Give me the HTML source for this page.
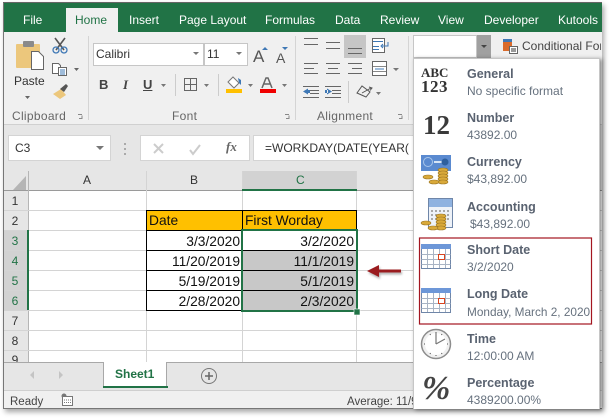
<!DOCTYPE html>
<html><head><meta charset="utf-8">
<style>
html,body{margin:0;padding:0;background:#fff;}
#p{position:relative;width:612px;height:419px;overflow:hidden;background:#fff;font-family:"Liberation Sans",sans-serif;}
#p div{position:absolute;white-space:nowrap;}
.t{font-size:12px;color:#fff;top:12px;line-height:16px;}
.g{font-size:12px;color:#666;line-height:14px;letter-spacing:.3px;}
.b{background:#d4d4d4;}
.n{font-size:12px;color:#333;line-height:14px;width:24px;text-align:center;left:3px;}
.c{font-size:13.800px;color:#111;line-height:20px;text-align:right;}
.h{font-size:12.500px;font-weight:bold;color:#596270;left:467px;line-height:15px;}
.s{font-size:12px;color:#66717e;left:467px;line-height:15px;}
svg{position:absolute;overflow:visible;}
</style></head><body><div id="p">

<!-- window -->
<div style="left:3px;top:2px;width:599px;height:407px;background:#f0f0f0;box-shadow:2px 3px 5px rgba(0,0,0,.35);"></div>
<div style="left:3px;top:2px;width:1px;height:407px;background:#777;"></div>
<div style="left:3px;top:2px;width:599px;height:1px;background:#666;"></div>
<div style="left:4px;top:3px;width:598px;height:29px;background:#217346;"></div>
<div style="left:66px;top:8px;width:52px;height:24px;background:#f0f0f0;"></div>
<div class="t" style="left:23px;">File</div>
<div class="t" style="left:75px;color:#217346;">Home</div>
<div class="t" style="left:129px;">Insert</div>
<div class="t" style="left:179px;">Page Layout</div>
<div class="t" style="left:265px;">Formulas</div>
<div class="t" style="left:335px;">Data</div>
<div class="t" style="left:380px;">Review</div>
<div class="t" style="left:438px;">View</div>
<div class="t" style="left:484px;">Developer</div>
<div class="t" style="left:558px;width:43px;overflow:hidden;">Kutools T</div>

<!-- clipboard -->
<svg style="left:0;top:0" width="210" height="125">
<rect x="16" y="44" width="24" height="24" fill="#ecc77c" rx="1"/>
<rect x="23" y="41" width="11" height="6" fill="#8a8a8a" rx="1"/>
<path d="M31.500 51.500h7l5 5v13h-12z" fill="#fff" stroke="#666"/>
<path d="M55 38l9 12M65 38l-9 12" stroke="#555" stroke-width="1.600" fill="none"/>
<circle cx="56" cy="50" r="3" fill="none" stroke="#3f78b5" stroke-width="1.300"/>
<circle cx="64" cy="50" r="3" fill="none" stroke="#3f78b5" stroke-width="1.300"/>
<path d="M52.500 63.500h6l2 2v8h-8z" fill="#fff" stroke="#666"/>
<rect x="58.500" y="67.500" width="8" height="8" fill="#fff" stroke="#666"/>
<path d="M60 70h5M60 72h5M60 74h5" stroke="#3f78b5"/>
<path d="M74 68l5 0-2.500 3zM25 96l5 0-2.500 3z" fill="#666"/>
<path d="M53 94l8-5 5 6-6 4z" fill="#ecc77c"/>
<path d="M60 89l6-5 2 2-4 6z" fill="#555"/>
<path d="M78 114.500h4M79 118.500h3v-3" stroke="#888" fill="none"/>
</svg>
<div style="left:14px;top:74px;font-size:12px;color:#333;line-height:14px;">Paste</div>
<div class="g" style="left:12px;top:109px;">Clipboard</div>
<div class="b" style="left:88px;top:36px;width:1px;height:84px;"></div>

<!-- font -->
<div style="left:93px;top:43px;width:109px;height:21px;background:#fff;border:1px solid #c6c6c6;"></div>
<div style="left:204px;top:43px;width:42px;height:21px;background:#fff;border:1px solid #c6c6c6;"></div>
<div style="left:96px;top:47px;font-size:12px;color:#333;line-height:14px;">Calibri</div>
<div style="left:207px;top:47px;font-size:12px;color:#333;line-height:14px;">11</div>
<div style="left:99px;top:77px;font-size:13px;font-weight:bold;color:#444;line-height:15px;">B</div>
<div style="left:123px;top:77px;font-size:13px;font-style:italic;color:#444;line-height:15px;font-family:'Liberation Serif',serif;font-weight:bold;">I</div>
<div style="left:143px;top:77px;font-size:13px;font-weight:bold;color:#444;line-height:15px;text-decoration:underline;">U</div>
<div style="left:253px;top:48px;font-size:17px;color:#555;line-height:18px;">A</div>
<div style="left:276px;top:51px;font-size:14px;color:#555;line-height:15px;">A</div>
<div class="g" style="left:172px;top:109px;">Font</div>
<svg style="left:0;top:0" width="300" height="125">
<path d="M193 52l6 0-3 3zM236 52l6 0-3 3zM161 84l5 0-2.500 3zM204 84l5 0-2.500 3zM248 84l5 0-2.500 3zM282 84l5 0-2.500 3z" fill="#777"/>
<path d="M262 50l3-3 3 3zM282 47h6l-3 3z" fill="#3f78b5"/>
<rect x="184.500" y="78.500" width="12" height="12" fill="none" stroke="#666"/>
<path d="M190.500 78v12M184 84.500h13" stroke="#666"/>
<rect x="175" y="74" width="1" height="22" fill="#ccc"/>
<rect x="218" y="74" width="1" height="22" fill="#ccc"/>
<path d="M228 82l5-5 6 6-5 5z" fill="#fff" stroke="#777"/>
<path d="M238 78l3 2v5l-2-2z" fill="#3f78b5"/>
<rect x="226" y="89" width="16" height="4" fill="#ffc000"/>
<rect x="260" y="89" width="16" height="4" fill="#f00000"/>
<path d="M262 88l4-10h2l4 10M264 84h6" fill="none" stroke="#666" stroke-width="1.500"/>
<path d="M285 114.500h4M286 118.500h3v-3" stroke="#888" fill="none"/>
</svg>
<div class="b" style="left:295px;top:36px;width:1px;height:84px;"></div>

<!-- alignment -->
<div style="left:344px;top:35px;width:22px;height:23px;background:#c6c6c6;"></div>
<svg style="left:0;top:0" width="412" height="125">
<path d="M304 38.500h14M304 44.500h14M326 42.500h14M326 48.500h14M348 48.500h14M348 53.500h14" stroke="#666"/>
<path d="M304 63.500h14M304 68.500h10M304 73.500h14M326 63.500h14M328 68.500h10M326 73.500h14M348 63.500h14M352 68.500h10M348 73.500h14" stroke="#666"/>
<path d="M303 86.500h16M310 90.500h9M310 93.500h9M303 97.500h16M325 86.500h16M332 90.500h9M332 93.500h9M325 97.500h16" stroke="#666"/>
<path d="M303 91.500l5-3v6zM308 90h2v3h-2zM332 91.500l-5-3v6zM325 90h3v3h-3z" fill="#3f78b5"/>
<rect x="372.500" y="38.500" width="12" height="14" fill="#fff" stroke="#666"/>
<path d="M373 41.500h10M373 46.500h6M373 49.500h6" stroke="#3f78b5"/>
<path d="M388 42v4h-6M383 44l-2 2 2 2" stroke="#3f78b5" fill="none"/>
<rect x="372.500" y="61.500" width="14" height="14" fill="#fff" stroke="#666"/>
<path d="M373 66.500h13M373 71.500h13" stroke="#888"/>
<path d="M375 69h9" stroke="#3f78b5"/>
<path d="M393 68l6 0-3 3zM376 92l5 0-2.500 3z" fill="#777"/>
<path d="M357 93l5-7 8 6-4 5z" fill="none" stroke="#555"/>
<path d="M362 93l9-5M369 87l3 1-2 2.500" stroke="#555" fill="none"/>
<rect x="348" y="81" width="1" height="22" fill="#ccc"/>
<path d="M398 114.500h4M399 118.500h3v-3" stroke="#888" fill="none"/>
</svg>
<div class="g" style="left:317px;top:109px;">Alignment</div>
<div class="b" style="left:408px;top:36px;width:1px;height:84px;"></div>

<!-- number dropdown -->
<div style="left:413px;top:35px;width:62px;height:21px;background:#fff;border:1px solid #c6c6c6;"></div>
<div style="left:477px;top:35px;width:14px;height:23px;background:#a0a0a0;"></div>
<svg style="left:0;top:0" width="612" height="70">
<path d="M481 45l6 0-3 3z" fill="#444"/>
<rect x="503" y="39" width="9" height="12" fill="#d96b2c"/>
<rect x="503" y="39" width="9" height="3" fill="#3f78b5"/>
<rect x="509.500" y="46.500" width="8" height="7" fill="#fff" stroke="#666"/>
<path d="M511 49h5M511 51h5" stroke="#333"/>
</svg>
<div style="left:522px;top:39px;width:79px;overflow:hidden;font-size:12px;color:#444;line-height:15px;">Conditional For</div>

<!-- divider + sheet -->
<div style="left:4px;top:124px;width:598px;height:238px;background:#e6e6e6;"></div>
<div style="left:4px;top:124px;width:598px;height:1px;background:#d0d0d0;"></div>
<div style="left:8px;top:135px;width:101px;height:24px;background:#fff;border:1px solid #d4d4d4;"></div>
<div style="left:15px;top:141px;font-size:12px;color:#333;line-height:14px;">C3</div>
<div style="left:140px;top:135px;width:108px;height:24px;background:#fff;border:1px solid #d4d4d4;"></div>
<div style="left:253px;top:135px;width:170px;height:24px;background:#fff;border:1px solid #d4d4d4;"></div>
<div style="left:265px;top:141px;font-size:12px;color:#333;line-height:14px;">=WORKDAY(DATE(YEAR(</div>
<div style="left:226px;top:139px;font-size:13px;color:#666;line-height:15px;font-family:'Liberation Serif',serif;font-style:italic;font-weight:bold;">fx</div>
<svg style="left:0;top:0" width="300" height="190">
<path d="M96 146l8 0-4 4z" fill="#777"/>
<rect x="124" y="143" width="2" height="2" fill="#aaa"/><rect x="124" y="148" width="2" height="2" fill="#aaa"/><rect x="124" y="153" width="2" height="2" fill="#aaa"/>
<path d="M154 144l9 9M163 144l-9 9M190 150l3 4 7-9" stroke="#ccc" stroke-width="2" fill="none"/>
<path d="M26 176v14h-13z" fill="#b5b5b5"/>
</svg>

<!-- grid -->
<div style="left:28px;top:190px;width:574px;height:172px;background:#fff;"></div>
<div style="left:4px;top:190px;width:24px;height:172px;background:#e6e6e6;"></div>
<div style="left:4px;top:230px;width:24px;height:80px;background:#d2d2d2;"></div>
<div style="left:242px;top:171px;width:114px;height:19px;background:#d2d2d2;"></div>
<div style="left:4px;top:190px;width:598px;height:1px;background:#9a9a9a;"></div>
<div style="left:28px;top:171px;width:1px;height:191px;background:#b5b5b5;"></div>
<svg style="left:0;top:0" width="612" height="362">
<g stroke="#d4d4d4">
<path d="M4 210.500H602M4 230.500H602M4 250.500H602M4 270.500H602M4 290.500H602M4 310.500H602M4 330.500H602M4 350.500H602"/>
<path d="M146.500 171V362M242.500 171V362M356.500 171V362"/>
</g>
</svg>
<div style="left:242px;top:189px;width:115px;height:2px;background:#217346;"></div>
<div style="left:27px;top:230px;width:2px;height:80px;background:#217346;"></div>
<div style="left:83px;top:173px;font-size:12px;color:#333;line-height:15px;">A</div>
<div style="left:190px;top:173px;font-size:12px;color:#333;line-height:15px;">B</div>
<div style="left:296px;top:173px;font-size:12px;color:#217346;line-height:15px;">C</div>
<div class="n" style="top:194px;">1</div><div class="n" style="top:214px;">2</div>
<div class="n" style="top:234px;color:#217346;">3</div><div class="n" style="top:254px;color:#217346;">4</div>
<div class="n" style="top:274px;color:#217346;">5</div><div class="n" style="top:294px;color:#217346;">6</div>
<div class="n" style="top:314px;">7</div><div class="n" style="top:334px;">8</div><div class="n" style="top:353px;">9</div>

<!-- table -->
<div style="left:146px;top:210px;width:211px;height:20px;background:#ffc000;"></div>
<div style="left:243px;top:250px;width:113px;height:60px;background:#c8c8c8;"></div>
<div class="c" style="left:149px;top:211px;text-align:left;">Date</div>
<div class="c" style="left:245px;top:211px;text-align:left;">First Worday</div>
<div class="c" style="left:146px;top:232px;width:94px;">3/3/2020</div>
<div class="c" style="left:146px;top:252px;width:94px;">11/20/2019</div>
<div class="c" style="left:146px;top:272px;width:94px;">5/19/2019</div>
<div class="c" style="left:146px;top:292px;width:94px;">2/28/2020</div>
<div class="c" style="left:242px;top:232px;width:112px;">3/2/2020</div>
<div class="c" style="left:242px;top:252px;width:112px;">11/1/2019</div>
<div class="c" style="left:242px;top:272px;width:112px;">5/1/2019</div>
<div class="c" style="left:242px;top:292px;width:112px;">2/3/2020</div>
<svg style="left:0;top:0" width="612" height="362">
<g stroke="#000"><path d="M146 210.500H356M146 230.500H356M146 250.500H356M146 270.500H356M146 290.500H356M146 310.500H242M146.500 210V311M242.500 210V311M356.500 210V230"/></g>
<rect x="242" y="230" width="115" height="81" fill="none" stroke="#217346" stroke-width="2"/>
<rect x="354" y="309" width="6" height="6" fill="#217346" stroke="#fff" stroke-width=".6"/>
<path d="M401 269.500H379V265l-12 6 12 6V272.500H401z" fill="#9a1c1f" filter="drop-shadow(1px 2px 1px rgba(0,0,0,.3))"/>
</svg>

<!-- tabs -->
<div style="left:4px;top:362px;width:598px;height:28px;background:#e6e6e6;border-top:1px solid #a8a8a8;box-sizing:border-box;"></div>
<div style="left:103px;top:362px;width:64px;height:25px;background:#fff;border-left:1px solid #a8a8a8;border-right:1px solid #a8a8a8;box-sizing:border-box;"></div>
<div style="left:103px;top:386px;width:65px;height:2px;background:#217346;"></div>
<div style="left:115px;top:367px;font-size:12px;font-weight:bold;color:#217346;line-height:15px;">Sheet1</div>
<svg style="left:0;top:0" width="612" height="392">
<path d="M34 371l-4 4 4 4zM59 371l4 4-4 4z" fill="#c4c4c4"/>
<circle cx="209" cy="376" r="7.500" fill="none" stroke="#777"/>
<path d="M205 376h8M209 372v8" stroke="#666" stroke-width="1.500"/>
</svg>
<div style="left:4px;top:390px;width:598px;height:18px;background:#f0f0f0;border-top:1px solid #cfcfcf;box-sizing:border-box;"></div>
<div style="left:3px;top:408px;width:599px;height:1px;background:#777;"></div>
<svg style="left:0;top:0" width="612" height="408">
<circle cx="64" cy="396" r="2.500" fill="#777"/>
<rect x="62.500" y="396.500" width="10" height="9" fill="#fff" stroke="#777"/>
<path d="M64 400h7M64 402.500h7" stroke="#777" stroke-dasharray="1 1"/>
</svg>
<div style="left:10px;top:395px;font-size:11.500px;color:#444;line-height:14px;">Ready</div>
<div style="left:347px;top:395px;font-size:11.500px;color:#444;line-height:14px;">Average: 11/9</div>

<!-- dropdown menu -->
<div style="left:413px;top:58px;width:187px;height:351px;background:#fff;border:1px solid #c6c6c6;border-bottom:none;box-sizing:border-box;box-shadow:2px 1px 4px rgba(0,0,0,.45);"></div>
<div style="left:421px;top:66px;font-family:'Liberation Serif',serif;font-weight:bold;font-size:13px;color:#333;line-height:13px;">ABC</div>
<div style="left:421px;top:78px;font-family:'Liberation Serif',serif;font-weight:bold;font-size:17px;color:#333;line-height:17px;letter-spacing:.5px;">123</div>
<div style="left:423px;top:110px;font-family:'Liberation Serif',serif;font-weight:bold;font-size:27px;color:#3a3a3a;line-height:30px;">12</div>
<div style="left:422px;top:372px;font-family:'Liberation Serif',serif;font-weight:bold;font-style:italic;font-size:34px;color:#444;line-height:34px;">%</div>
<div class="h" style="top:67px;">General</div><div class="s" style="top:84px;">No specific format</div>
<div class="h" style="top:111px;">Number</div><div class="s" style="top:128px;">43892.00</div>
<div class="h" style="top:155px;">Currency</div><div class="s" style="top:172px;">$43,892.00</div>
<div class="h" style="top:200px;">Accounting</div><div class="s" style="top:217px;left:470px;">$43,892.00</div>
<div class="h" style="top:243px;">Short Date</div><div class="s" style="top:260px;">3/2/2020</div>
<div class="h" style="top:287px;">Long Date</div><div class="s" style="top:305px;font-size:11.800px;">Monday, March 2, 2020</div>
<div class="h" style="top:332px;">Time</div><div class="s" style="top:349px;">12:00:00 AM</div>
<div class="h" style="top:376px;">Percentage</div><div class="s" style="top:393px;">4389200.00%</div>

<svg style="left:0;top:0" width="612" height="419">
<defs>
<g id="cal"><rect x=".5" y=".5" width="29" height="24" fill="#fff" stroke="#6f86a8"/><rect x="0" y="0" width="30" height="5" fill="#6d97d8"/>
<path d="M.5 10.500h29M.5 15.500h29M.5 20.500h29M6.500 5v19M12.500 5v19M18.500 5v19M24.500 5v19" stroke="#a9b4c4"/>
<rect x="17.500" y="10.500" width="6" height="5" fill="#fff" stroke="#d9441e"/></g>
<g id="coins"><ellipse cx="0" cy="0" rx="5" ry="2" fill="#d9a93a" stroke="#9a7420" stroke-width=".6"/></g>
</defs>
<!-- currency -->
<rect x="421" y="155" width="30" height="16" fill="#5a8ad0"/>
<circle cx="428" cy="162" r="4.500" fill="none" stroke="#a9c6ea"/>
<rect x="434" y="161" width="9" height="2" fill="#d6e4f5"/>
<circle cx="445" cy="162" r="3.500" fill="#2e5f9e"/>
<use href="#coins" x="443" y="170"/><use href="#coins" x="443" y="173"/><use href="#coins" x="443" y="176"/><use href="#coins" x="443" y="179"/><use href="#coins" x="443" y="182"/>
<use href="#coins" x="428" y="177"/><use href="#coins" x="434" y="182"/>
<!-- accounting -->
<rect x="428.500" y="198.500" width="24" height="29" fill="#eef2f8" stroke="#6f86a8"/>
<rect x="429" y="199" width="23" height="8" fill="#8fb2e0"/>
<path d="M431 211h18M431 215h18M431 219h18" stroke="#a9a9a9" stroke-width="2" stroke-dasharray="2 2"/>
<use href="#coins" x="441" y="216"/><use href="#coins" x="441" y="219"/><use href="#coins" x="441" y="222"/><use href="#coins" x="441" y="225"/><use href="#coins" x="441" y="228"/>
<use href="#coins" x="426" y="223"/><use href="#coins" x="433" y="228"/>
<!-- dates -->
<use href="#cal" x="421" y="244"/><use href="#cal" x="421" y="288"/>
<!-- clock -->
<circle cx="436" cy="344" r="14.500" fill="#f0f0f0" stroke="#8d8d8d" stroke-width="1.500"/>
<circle cx="436" cy="344" r="11" fill="#fff"/>
<path d="M436 344v-11M436 344l9-5" stroke="#777" stroke-width="1.200"/>
<path d="M436 332v1M448 344h-1M436 356v-1M424 344h1M430 334l.5 1M442 334l-.5 1M430 354l.5-1M442 354l-.5-1" stroke="#555"/>
<!-- red box -->
<rect x="419.500" y="238" width="172" height="86" fill="none" stroke="#a31520" stroke-width="1.200"/>
</svg>
</div></body></html>
